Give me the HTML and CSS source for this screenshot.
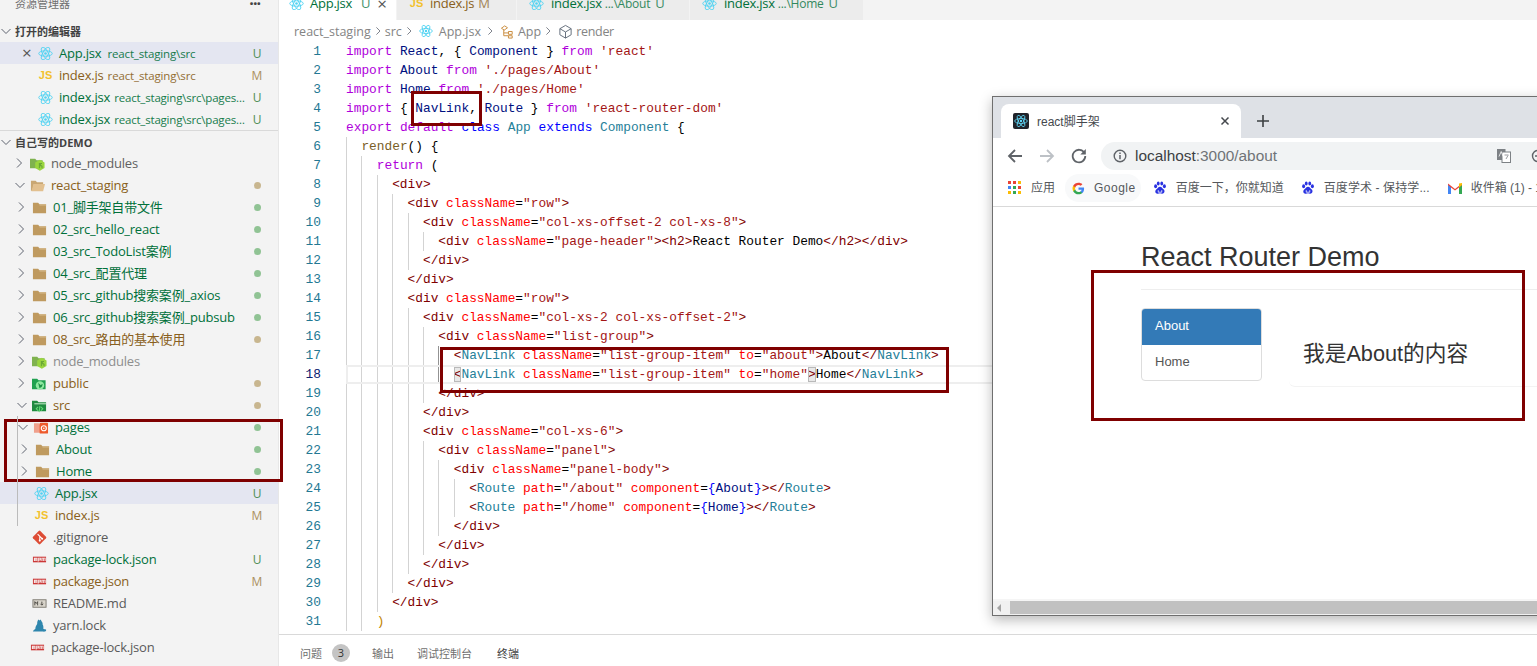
FILE: index.html
```html
<!DOCTYPE html>
<html lang="zh">
<head>
<meta charset="utf-8">
<title>App.jsx</title>
<link rel="stylesheet" href="styles.css">
</head>
<body>
<svg class="defs" width="0" height="0" aria-hidden="true">
  <symbol id="react" viewBox="0 0 16 16"><g fill="none" stroke="#52d3f2" stroke-width="1"><ellipse cx="8" cy="8" rx="7.2" ry="2.9"/><ellipse cx="8" cy="8" rx="7.2" ry="2.9" transform="rotate(60 8 8)"/><ellipse cx="8" cy="8" rx="7.2" ry="2.9" transform="rotate(120 8 8)"/></g><circle cx="8" cy="8" r="1.4" fill="#52d3f2"/></symbol>
  <symbol id="chev-r" viewBox="0 0 10 12"><path d="M3 1.5 7.5 6 3 10.5" fill="none" stroke="#5f6470" stroke-width="1"/></symbol>
  <symbol id="chev-d" viewBox="0 0 12 10"><path d="M1.5 3 6 7.5 10.5 3" fill="none" stroke="#5f6470" stroke-width="1"/></symbol>
  <symbol id="folder" viewBox="0 0 16 16"><path d="M1 3h5.500l1.500 1.500h7v9.500H1z" fill="#bf9a5f"/><path d="M8 4.500h7V6H8z" fill="#d3b586"/></symbol>
  <symbol id="folder-open" viewBox="0 0 16 16"><path d="M1 3h5l1.500 1.500h6.500V7H4L2.500 13.500H1z" fill="#c9a773"/><path d="M3.800 6.500H16l-2 7.500H1.500z" fill="#e2c08f"/></symbol>
  <symbol id="folder-node" viewBox="0 0 16 16"><path d="M0 3h5.500L7 4.500h6.500V13H0z" fill="#7fb24f"/><path d="M10.500 4l5 2.900v5.800l-5 2.900-5-2.900V6.900z" fill="#9ad53f"/><path d="M10 7.500v5.500M12.800 8H11v2.500h1.800V13" stroke="#5d9a33" stroke-width=".9" fill="none"/></symbol>
  <symbol id="folder-public" viewBox="0 0 16 16"><path d="M0 3h5.500L7 4.500h7.500V14H0z" fill="#20a150"/><circle cx="8.500" cy="10" r="4.500" fill="#8ee9a0"/><path d="M6.500 7l2.500 2.500 2.500-1-1 3-2.500 1.500z" fill="#1d9147"/></symbol>
  <symbol id="folder-src" viewBox="0 0 16 16"><path d="M0 3h5.500L7 4.500h8V14H0z" fill="#1f8a3f"/><path d="M2.500 5.500H15v1.300H2.500z" fill="#a9dbb0"/><path d="M6.500 9.500 4.500 11.500l2 2M9.500 9.500l2 2-2 2M8.500 8.500l-1 6.500" stroke="#62dc75" stroke-width="1.100" fill="none"/></symbol>
  <symbol id="folder-pages" viewBox="0 0 16 16"><path d="M.5 3.500h5l1.500 1.500h6v8.500H.5z" fill="#f0a08c"/><rect x="6.500" y="3" width="9" height="11.500" rx="1" fill="#ee5a2c"/><circle cx="11" cy="8.800" r="2.700" fill="none" stroke="#fff" stroke-width="1.200"/><circle cx="11" cy="8.800" r=".8" fill="#fff"/></symbol>
  <symbol id="npm" viewBox="0 0 16 16"><rect x="1" y="5" width="14" height="6" fill="#cb3837"/><path d="M2 6h3.500v3.500h-1V7h-.5v2.500H2zM6 6h3.500v3H7.200v1H6zM7.200 7v1h1V7zM10 6h4.500v3.500h-1V7h-.6v2.500h-1V7h-.7v2.500H10z" fill="#f6e6e6"/></symbol>
  <symbol id="git" viewBox="0 0 16 16"><rect x="2.500" y="2.500" width="11" height="11" rx="1.200" transform="rotate(45 8 8)" fill="#dd4c35"/><path d="M6 4.500 11 9.500M8.300 6.800v4.500" stroke="#fff" stroke-width="1.100" fill="none"/><circle cx="8.300" cy="11.300" r="1.100" fill="#fff"/><circle cx="10.800" cy="9.300" r="1.100" fill="#fff"/></symbol>
  <symbol id="md" viewBox="0 0 16 16"><rect x="1" y="4" width="14" height="8" fill="#d9d5cc" stroke="#7f7b72"/><path d="M3 10V6l1.500 2L6 6v4M10.500 6v3.500M9 8.300l1.500 1.500L12 8.300" stroke="#4e4b45" stroke-width="1" fill="none"/></symbol>
  <symbol id="yarn" viewBox="0 0 16 16"><path d="M1 14.500c.3-1.500 1.500-2 2.500-2.800.2-2.500 1.200-4 2-5.200C5.500 4 6 2.600 7 1.500l1 1.200 1.300-1 .8 1.800c1 .8 1.400 2.200 1.200 3.500 1 1.500 1 3.200.7 4.500.9.500 2 .8 3 .8v1.500c-1 .8-2.500.9-3.500.7H2.500c-.9 0-1.500-.1-1.500-.500z" fill="#2e86ad"/></symbol>
  <symbol id="paw" viewBox="0 0 16 16"><g fill="#2932e1"><ellipse cx="3" cy="6" rx="1.700" ry="2.200"/><ellipse cx="6" cy="2.800" rx="1.600" ry="2.200"/><ellipse cx="10" cy="2.800" rx="1.600" ry="2.200"/><ellipse cx="13" cy="6" rx="1.700" ry="2.200"/><path d="M8 6.500c2 0 2.800 2 4.300 3.200 1.700 1.700.7 4.800-1.800 4.800-1 0-1.500-.4-2.500-.4s-1.700.5-3 .4c-2.300 0-3.200-3-1.400-4.800C5.300 8.500 6 6.500 8 6.500z"/></g><path d="M6 10.500v2.300h4v-2.300" stroke="#fff" stroke-width=".9" fill="none"/></symbol>
</svg>

<div class="app">
  <aside class="side">
    <div class="explorer"><span>资源管理器</span><span class="dots">···</span></div>

    <div class="sec"><svg class="ch-d"><use href="#chev-d"/></svg>打开的编辑器</div>
    <div class="row sel oe">
      <span class="close">×</span><svg class="ic"><use href="#react"/></svg>
      <span class="nm un">App.jsx</span><span class="ds un">react_staging\src</span><span class="bd u">U</span>
    </div>
    <div class="row oe2">
      <b class="js">JS</b>
      <span class="nm mod">index.js</span><span class="ds mod">react_staging\src</span><span class="bd m">M</span>
    </div>
    <div class="row oe2">
      <svg class="ic"><use href="#react"/></svg>
      <span class="nm un">index.jsx</span><span class="ds un trunc">react_staging\src\pages\About</span><span class="bd u">U</span>
    </div>
    <div class="row oe2">
      <svg class="ic"><use href="#react"/></svg>
      <span class="nm un">index.jsx</span><span class="ds un trunc">react_staging\src\pages\Home</span><span class="bd u">U</span>
    </div>

    <div class="sec sec2"><svg class="ch-d"><use href="#chev-d"/></svg>自己写的DEMO</div>

    <div class="row i0"><svg class="ch-r"><use href="#chev-r"/></svg><svg class="ic"><use href="#folder-node"/></svg><span class="nm dim">node_modules</span></div>
    <div class="row i0"><svg class="ch-d2"><use href="#chev-d"/></svg><svg class="ic"><use href="#folder-open"/></svg><span class="nm mod">react_staging</span><span class="bd dot dm"></span></div>
    <div class="row i1"><svg class="ch-r"><use href="#chev-r"/></svg><svg class="ic"><use href="#folder"/></svg><span class="nm un">01_脚手架自带文件</span><span class="bd dot du"></span></div>
    <div class="row i1"><svg class="ch-r"><use href="#chev-r"/></svg><svg class="ic"><use href="#folder"/></svg><span class="nm un">02_src_hello_react</span><span class="bd dot du"></span></div>
    <div class="row i1"><svg class="ch-r"><use href="#chev-r"/></svg><svg class="ic"><use href="#folder"/></svg><span class="nm un">03_src_TodoList案例</span><span class="bd dot du"></span></div>
    <div class="row i1"><svg class="ch-r"><use href="#chev-r"/></svg><svg class="ic"><use href="#folder"/></svg><span class="nm un">04_src_配置代理</span><span class="bd dot du"></span></div>
    <div class="row i1"><svg class="ch-r"><use href="#chev-r"/></svg><svg class="ic"><use href="#folder"/></svg><span class="nm un">05_src_github搜索案例_axios</span><span class="bd dot du"></span></div>
    <div class="row i1"><svg class="ch-r"><use href="#chev-r"/></svg><svg class="ic"><use href="#folder"/></svg><span class="nm un">06_src_github搜索案例_pubsub</span><span class="bd dot du"></span></div>
    <div class="row i1"><svg class="ch-r"><use href="#chev-r"/></svg><svg class="ic"><use href="#folder"/></svg><span class="nm mod">08_src_路由的基本使用</span><span class="bd dot dm"></span></div>
    <div class="row i1"><svg class="ch-r"><use href="#chev-r"/></svg><svg class="ic"><use href="#folder-node"/></svg><span class="nm ign">node_modules</span></div>
    <div class="row i1"><svg class="ch-r"><use href="#chev-r"/></svg><svg class="ic"><use href="#folder-public"/></svg><span class="nm mod">public</span><span class="bd dot dm"></span></div>
    <div class="row i1"><svg class="ch-d2"><use href="#chev-d"/></svg><svg class="ic"><use href="#folder-src"/></svg><span class="nm mod">src</span><span class="bd dot dm"></span></div>
    <div class="subtree">
      <div class="row i2"><svg class="ch-d2"><use href="#chev-d"/></svg><svg class="ic"><use href="#folder-pages"/></svg><span class="nm un">pages</span><span class="bd dot du"></span></div>
      <div class="row i3"><svg class="ch-r"><use href="#chev-r"/></svg><svg class="ic"><use href="#folder"/></svg><span class="nm un">About</span><span class="bd dot du"></span></div>
      <div class="row i3"><svg class="ch-r"><use href="#chev-r"/></svg><svg class="ic"><use href="#folder"/></svg><span class="nm un">Home</span><span class="bd dot du"></span></div>
      <div class="row sel i4"><svg class="ic"><use href="#react"/></svg><span class="nm un">App.jsx</span><span class="bd u">U</span></div>
      <div class="row i4"><b class="js">JS</b><span class="nm mod">index.js</span><span class="bd m">M</span></div>
    </div>
    <div class="row i5"><svg class="ic"><use href="#git"/></svg><span class="nm plain">.gitignore</span></div>
    <div class="row i5"><svg class="ic"><use href="#npm"/></svg><span class="nm un">package-lock.json</span><span class="bd u">U</span></div>
    <div class="row i5"><svg class="ic"><use href="#npm"/></svg><span class="nm mod">package.json</span><span class="bd m">M</span></div>
    <div class="row i5"><svg class="ic"><use href="#md"/></svg><span class="nm plain">README.md</span></div>
    <div class="row i5"><svg class="ic"><use href="#yarn"/></svg><span class="nm plain">yarn.lock</span></div>
    <div class="row i6"><svg class="ic"><use href="#npm"/></svg><span class="nm plain">package-lock.json</span></div>
  </aside>

  <main class="main">
    <div class="tabs">
      <div class="tab active t1"><svg class="ic"><use href="#react"/></svg><span class="un">App.jsx</span><span class="un tb">U</span><span class="tx">×</span></div>
      <div class="tab t2"><b class="js">JS</b><span class="mod">index.js</span><span class="mod tb6">M</span></div>
      <div class="tab t3"><svg class="ic"><use href="#react"/></svg><span class="un">index.jsx</span><span class="un tp">...\About</span><span class="un tb2">U</span></div>
      <div class="tab t4"><svg class="ic"><use href="#react"/></svg><span class="un">index.jsx</span><span class="un tp">...\Home</span><span class="un tb2">U</span></div>
    </div>
    <div class="crumbs">
      <span>react_staging</span><svg class="cs"><use href="#chev-r"/></svg><span>src</span><svg class="cs"><use href="#chev-r"/></svg>
      <svg class="ic"><use href="#react"/></svg><span class="cn">App.jsx</span><svg class="cs"><use href="#chev-r"/></svg>
      <svg class="cg" viewBox="0 0 16 16"><path d="M1.500 4.500 5 2l3 2-3.500 2.500zM9 8h4v3H9zM9 12.500h4V15H9zM4 6v6.500h5M4 9.500h5" fill="none" stroke="#c98a3a" stroke-width="1"/></svg><span>App</span><svg class="cs"><use href="#chev-r"/></svg>
      <svg class="cg" viewBox="0 0 16 16"><path d="M8 1.500 14 5v6.500L8 15l-6-3.500V5zM2 5l6 3.500L14 5M8 8.500V15" fill="none" stroke="#5f6a78" stroke-width="1"/></svg><span class="rn">render</span>
    </div>
    <div class="code">
      <div class="l"><span class="n">1</span><span class="c"><span class="k">import</span> <span class="v">React</span>, { <span class="v">Component</span> } <span class="k">from</span> <span class="s">'react'</span></span></div>
      <div class="l"><span class="n">2</span><span class="c"><span class="k">import</span> <span class="v">About</span> <span class="k">from</span> <span class="s">'./pages/About'</span></span></div>
      <div class="l"><span class="n">3</span><span class="c"><span class="k">import</span> <span class="v">Home</span> <span class="k">from</span> <span class="s">'./pages/Home'</span></span></div>
      <div class="l"><span class="n">4</span><span class="c"><span class="k">import</span> { <span class="v">NavLink</span>, <span class="v">Route</span> } <span class="k">from</span> <span class="s">'react-router-dom'</span></span></div>
      <div class="l"><span class="n">5</span><span class="c"><span class="k">export</span> <span class="k">default</span> <span class="b">class</span> <span class="t">App</span> <span class="b">extends</span> <span class="t">Component</span> {</span></div>
      <div class="l"><span class="n">6</span><span class="c"><i class="g"></i><span class="f">render</span>() {</span></div>
      <div class="l"><span class="n">7</span><span class="c"><i class="g"></i><i class="g"></i><span class="k">return</span> (</span></div>
      <div class="l"><span class="n">8</span><span class="c"><i class="g"></i><i class="g"></i><i class="g"></i><span class="h">&lt;div&gt;</span></span></div>
      <div class="l"><span class="n">9</span><span class="c"><i class="g"></i><i class="g"></i><i class="g"></i><i class="g"></i><span class="h">&lt;div</span> <span class="a">className</span>=<span class="s">"row"</span><span class="h">&gt;</span></span></div>
      <div class="l"><span class="n">10</span><span class="c"><i class="g"></i><i class="g"></i><i class="g"></i><i class="g"></i><i class="g"></i><span class="h">&lt;div</span> <span class="a">className</span>=<span class="s">"col-xs-offset-2 col-xs-8"</span><span class="h">&gt;</span></span></div>
      <div class="l"><span class="n">11</span><span class="c"><i class="g"></i><i class="g"></i><i class="g"></i><i class="g"></i><i class="g"></i><i class="g"></i><span class="h">&lt;div</span> <span class="a">className</span>=<span class="s">"page-header"</span><span class="h">&gt;&lt;h2&gt;</span>React Router Demo<span class="h">&lt;/h2&gt;&lt;/div&gt;</span></span></div>
      <div class="l"><span class="n">12</span><span class="c"><i class="g"></i><i class="g"></i><i class="g"></i><i class="g"></i><i class="g"></i><span class="h">&lt;/div&gt;</span></span></div>
      <div class="l"><span class="n">13</span><span class="c"><i class="g"></i><i class="g"></i><i class="g"></i><i class="g"></i><span class="h">&lt;/div&gt;</span></span></div>
      <div class="l"><span class="n">14</span><span class="c"><i class="g"></i><i class="g"></i><i class="g"></i><i class="g"></i><span class="h">&lt;div</span> <span class="a">className</span>=<span class="s">"row"</span><span class="h">&gt;</span></span></div>
      <div class="l"><span class="n">15</span><span class="c"><i class="g"></i><i class="g"></i><i class="g"></i><i class="g"></i><i class="g"></i><span class="h">&lt;div</span> <span class="a">className</span>=<span class="s">"col-xs-2 col-xs-offset-2"</span><span class="h">&gt;</span></span></div>
      <div class="l"><span class="n">16</span><span class="c"><i class="g"></i><i class="g"></i><i class="g"></i><i class="g"></i><i class="g"></i><i class="g"></i><span class="h">&lt;div</span> <span class="a">className</span>=<span class="s">"list-group"</span><span class="h">&gt;</span></span></div>
      <div class="l"><span class="n">17</span><span class="c"><i class="g"></i><i class="g"></i><i class="g"></i><i class="g"></i><i class="g"></i><i class="g"></i><i class="g on"></i><span class="h">&lt;</span><span class="t">NavLink</span> <span class="a">className</span>=<span class="s">"list-group-item"</span> <span class="a">to</span>=<span class="s">"about"</span><span class="h">&gt;</span>About<span class="h">&lt;/</span><span class="t">NavLink</span><span class="h">&gt;</span></span></div>
      <div class="l cur"><span class="n">18</span><span class="c"><i class="g"></i><i class="g"></i><i class="g"></i><i class="g"></i><i class="g"></i><i class="g"></i><i class="g on"></i><span class="h mb">&lt;</span><span class="t">NavLink</span> <span class="a">className</span>=<span class="s">"list-group-item"</span> <span class="a">to</span>=<span class="s">"home"</span><span class="h mb">&gt;</span>Home<span class="h">&lt;/</span><span class="t">NavLink</span><span class="h">&gt;</span></span></div>
      <div class="l"><span class="n">19</span><span class="c"><i class="g"></i><i class="g"></i><i class="g"></i><i class="g"></i><i class="g"></i><i class="g"></i><span class="h">&lt;/div&gt;</span></span></div>
      <div class="l"><span class="n">20</span><span class="c"><i class="g"></i><i class="g"></i><i class="g"></i><i class="g"></i><i class="g"></i><span class="h">&lt;/div&gt;</span></span></div>
      <div class="l"><span class="n">21</span><span class="c"><i class="g"></i><i class="g"></i><i class="g"></i><i class="g"></i><i class="g"></i><span class="h">&lt;div</span> <span class="a">className</span>=<span class="s">"col-xs-6"</span><span class="h">&gt;</span></span></div>
      <div class="l"><span class="n">22</span><span class="c"><i class="g"></i><i class="g"></i><i class="g"></i><i class="g"></i><i class="g"></i><i class="g"></i><span class="h">&lt;div</span> <span class="a">className</span>=<span class="s">"panel"</span><span class="h">&gt;</span></span></div>
      <div class="l"><span class="n">23</span><span class="c"><i class="g"></i><i class="g"></i><i class="g"></i><i class="g"></i><i class="g"></i><i class="g"></i><i class="g"></i><span class="h">&lt;div</span> <span class="a">className</span>=<span class="s">"panel-body"</span><span class="h">&gt;</span></span></div>
      <div class="l"><span class="n">24</span><span class="c"><i class="g"></i><i class="g"></i><i class="g"></i><i class="g"></i><i class="g"></i><i class="g"></i><i class="g"></i><i class="g"></i><span class="h">&lt;</span><span class="t">Route</span> <span class="a">path</span>=<span class="s">"/about"</span> <span class="a">component</span>=<span class="p">{</span><span class="v">About</span><span class="p">}</span><span class="h">&gt;&lt;/</span><span class="t">Route</span><span class="h">&gt;</span></span></div>
      <div class="l"><span class="n">25</span><span class="c"><i class="g"></i><i class="g"></i><i class="g"></i><i class="g"></i><i class="g"></i><i class="g"></i><i class="g"></i><i class="g"></i><span class="h">&lt;</span><span class="t">Route</span> <span class="a">path</span>=<span class="s">"/home"</span> <span class="a">component</span>=<span class="p">{</span><span class="v">Home</span><span class="p">}</span><span class="h">&gt;&lt;/</span><span class="t">Route</span><span class="h">&gt;</span></span></div>
      <div class="l"><span class="n">26</span><span class="c"><i class="g"></i><i class="g"></i><i class="g"></i><i class="g"></i><i class="g"></i><i class="g"></i><i class="g"></i><span class="h">&lt;/div&gt;</span></span></div>
      <div class="l"><span class="n">27</span><span class="c"><i class="g"></i><i class="g"></i><i class="g"></i><i class="g"></i><i class="g"></i><i class="g"></i><span class="h">&lt;/div&gt;</span></span></div>
      <div class="l"><span class="n">28</span><span class="c"><i class="g"></i><i class="g"></i><i class="g"></i><i class="g"></i><i class="g"></i><span class="h">&lt;/div&gt;</span></span></div>
      <div class="l"><span class="n">29</span><span class="c"><i class="g"></i><i class="g"></i><i class="g"></i><i class="g"></i><span class="h">&lt;/div&gt;</span></span></div>
      <div class="l"><span class="n">30</span><span class="c"><i class="g"></i><i class="g"></i><i class="g"></i><span class="h">&lt;/div&gt;</span></span></div>
      <div class="l"><span class="n">31</span><span class="c"><i class="g"></i><i class="g"></i><span class="y">)</span></span></div>
    </div>
    <div class="panel-tabs">
      <span>问题</span><span class="count">3</span><span class="pt1">输出</span><span class="pt2">调试控制台</span><span class="pt3">终端</span>
    </div>
  </main>
</div>

<section class="chrome">
  <div class="strip">
    <div class="ctab">
      <svg class="fav" viewBox="0 0 16 16"><rect width="16" height="16" rx="2" fill="#20232a"/><g fill="none" stroke="#61dafb" stroke-width=".8"><ellipse cx="8" cy="8" rx="6.300" ry="2.500"/><ellipse cx="8" cy="8" rx="6.300" ry="2.500" transform="rotate(60 8 8)"/><ellipse cx="8" cy="8" rx="6.300" ry="2.500" transform="rotate(120 8 8)"/></g><circle cx="8" cy="8" r="1.200" fill="#61dafb"/></svg>
      <span class="ctitle">react脚手架</span>
      <svg class="cclose" viewBox="0 0 10 10"><path d="M1.500 1.500l7 7M8.500 1.500l-7 7" stroke="#45484d" stroke-width="1.500"/></svg>
    </div>
    <svg class="plus" viewBox="0 0 12 12"><path d="M6 0v12M0 6h12" stroke="#3c4043" stroke-width="1.600"/></svg>
  </div>
  <div class="toolbar">
    <svg class="nav" viewBox="0 0 16 16"><path d="M15 8H2M8 2 2 8l6 6" fill="none" stroke="#5f6368" stroke-width="1.800"/></svg>
    <svg class="nav" viewBox="0 0 16 16"><path d="M1 8h13M8 2l6 6-6 6" fill="none" stroke="#bdc1c6" stroke-width="1.800"/></svg>
    <svg class="nav" viewBox="0 0 16 16"><path d="M13.500 5A6.300 6.300 0 1 0 14.300 8" fill="none" stroke="#5f6368" stroke-width="1.800"/><path d="M14.800 1v5.500H9.300z" fill="#5f6368"/></svg>
    <div class="omni">
      <svg class="info" viewBox="0 0 14 14"><circle cx="7" cy="7" r="5.800" fill="none" stroke="#5f6368" stroke-width="1.400"/><path d="M7 6v4.300M7 3.500v1.500" stroke="#5f6368" stroke-width="1.500"/></svg>
      <span class="url"><span class="host">localhost</span>:3000/about</span>
      <svg class="trans" viewBox="0 0 14 14"><rect x="0" y="0" width="8.500" height="11" fill="#7d8185"/><rect x="5" y="3" width="8.500" height="10.500" fill="#fff" stroke="#7d8185"/><path d="M2 7.500 4.200 2.500l2 5" stroke="#fff" stroke-width=".8" fill="none"/><path d="M7.500 6h4M9 10l2-3.500" stroke="#7d8185" stroke-width=".8" fill="none"/></svg>
      <svg class="zoomi" viewBox="0 0 14 14"><circle cx="7" cy="7" r="5.500" fill="none" stroke="#5f6368" stroke-width="1.400"/><path d="M4 7h6" stroke="#5f6368" stroke-width="1.400"/></svg>
    </div>
  </div>
  <div class="bookmarks">
    <svg class="apps" viewBox="0 0 14 14"><g fill="#ea4335"><rect width="3" height="3"/><rect x="5" width="3" height="3"/></g><rect x="10" width="3" height="3" fill="#fbbc05"/><rect y="5" width="3" height="3" fill="#4285f4"/><rect x="5" y="5" width="3" height="3" fill="#34a853"/><rect x="10" y="5" width="3" height="3" fill="#ea4335"/><rect y="10" width="3" height="3" fill="#fbbc05"/><rect x="5" y="10" width="3" height="3" fill="#34a853"/><rect x="10" y="10" width="3" height="3" fill="#fbbc05"/></svg>
    <span class="bm">应用</span>
    <span class="gpill"><svg class="gl" viewBox="0 0 14 14"><path d="M13 7.200c0-.5 0-.9-.1-1.300H7v2.500h3.400c-.2.800-.6 1.400-1.300 1.900v1.600h2.100C12.400 10.700 13 9.100 13 7.200z" fill="#4285f4"/><path d="M7 13.300c1.700 0 3.200-.6 4.200-1.500l-2.100-1.600c-.6.400-1.300.6-2.100.6-1.600 0-3-1.100-3.500-2.600H1.300v1.700C2.400 12 4.500 13.300 7 13.300z" fill="#34a853"/><path d="M3.500 8.200c-.3-.8-.3-1.600 0-2.400V4.100H1.300a6.300 6.300 0 0 0 0 5.800z" fill="#fbbc05"/><path d="M7 3.200c.9 0 1.800.3 2.400.9l1.800-1.800C10.100 1.300 8.700.7 7 .7 4.500.7 2.400 2 1.300 4.100l2.200 1.700C4 4.300 5.400 3.200 7 3.200z" fill="#ea4335"/></svg><span class="gt">Google</span></span>
    <svg class="pw"><use href="#paw"/></svg><span class="bm b1">百度一下，你就知道</span>
    <svg class="pw"><use href="#paw"/></svg><span class="bm b2">百度学术 - 保持学...</span>
    <svg class="gm" viewBox="0 0 16 12"><path d="M1 12V1.500l7 5.500 7-5.500V12h-3V5.500L8 8.500 4 5.500V12z" fill="#ea4335"/><path d="M1 12h3V5.500L1 3z" fill="#4285f4"/><path d="M12 12h3V3l-3 2.500z" fill="#34a853"/><path d="M12 1.500 15 1v2l-3 2.500z" fill="#fbbc05"/></svg><span class="bm b3">收件箱 (1) - 1</span>
  </div>
  <div class="page">
    <h2 class="title">React Router Demo</h2>
    <div class="rule"></div>
    <div class="cols">
      <div class="lg"><div class="lgi on">About</div><div class="lgi">Home</div></div>
      <div class="about-panel">我是About的内容</div>
    </div>
  </div>
  <div class="hscroll"><span class="arrow"></span><span class="thumb"></span></div>
</section>

<div class="mark m1"></div>
<div class="mark m2"></div>
<div class="mark m3"></div>
<div class="mark m4"></div>
</body>
</html>
```

FILE: styles.css
```css
* { box-sizing: border-box; }
html, body { margin: 0; height: 100%; }
body { width: 1537px; height: 666px; overflow: hidden; position: relative; background: #fff; font-family: "Open Sans", "Noto Sans CJK SC", sans-serif; font-size: 13px; color: #424242; }
.defs { position: absolute; }
.app { display: flex; height: 666px; }

/* sidebar */
.side { width: 278px; flex: none; height: 666px; overflow: hidden; background: #f3f3f3; }
.explorer { display: flex; justify-content: space-between; height: 20px; padding: 0 18px 0 15px; line-height: 7px; font-size: 11px; color: #6f6f6f; }
.dots { font-size: 16px; font-weight: 700; letter-spacing: -1px; color: #444; }
.sec { height: 22px; display: flex; align-items: center; font-size: 11px; font-weight: 700; color: #424242; padding-left: 0; }
.sec2 { border-top: 1px solid #d9d9d9; height: 22px; }
.ch-d { width: 12px; height: 10px; margin: 0 3px 0 0; flex: none; }
.row { height: 22px; display: flex; align-items: center; padding-right: 14px; white-space: nowrap; }
.sel { background: #e4e6f1; }
.ic { width: 15px; height: 15px; flex: none; }
.ch-r { width: 10px; height: 12px; flex: none; margin-right: 6px; }
.ch-d2 { width: 12px; height: 10px; flex: none; margin-right: 4px; }
.nm { margin-left: 6px; font-size: 13px; line-height: 22px; letter-spacing: -.2px; }
.ds { margin-left: 6px; font-size: 11.500px; letter-spacing: -.15px; opacity: .9; }
.oe2 .ds { margin-left: 4px; }
.trunc { overflow: hidden; text-overflow: ellipsis; min-width: 0; flex: 1; margin-right: 5px; letter-spacing: -.2px; }
.un { color: #00703a; }
.mod { color: #895f20; }
.dim { color: #616161; }
.ign { color: #8e8e8e; }
.plain { color: #5a5a5a; }
.bd { margin-left: auto; width: 14px; flex: none; text-align: center; font-size: 12px; }
.u { color: #4f8f55; }
.m { color: #ab9060; }
.dot { height: 7px; width: 7px; border-radius: 50%; margin-right: 3px; }
.du { background: #90c394; }
.dm { background: #c8b68f; }
.oe { padding-left: 22px; }
.oe .close { width: 16px; font-size: 17px; line-height: 20px; color: #555; flex: none; }
.oe2 { padding-left: 38px; }
.js { width: 15px; flex: none; font: 700 11px "Liberation Sans", sans-serif; color: #f2c12e; text-align: center; }
.i0 { padding-left: 14px; }
.i1 { padding-left: 16px; }
.i2 { padding-left: 17px; }
.i2 .ic { width: 16px; }
.i3 { padding-left: 19px; }
.i4 { padding-left: 34px; }
.i5 { padding-left: 32px; }
.i6 { padding-left: 30px; }
.subtree { position: relative; }
.subtree::before { content: ""; position: absolute; left: 17px; top: 0; width: 1px; height: 110px; background: #bbb; z-index: 1; }

/* editor */
.main { flex: 1; min-width: 0; display: flex; flex-direction: column; height: 666px; border-left: 1px solid #e7e7e7; }
.tabs { display: flex; height: 20px; background: #f3f3f3; overflow: hidden; line-height: 7px; }
.tab { display: flex; align-items: flex-start; padding: 0 0 0 12px; border-right: 1px solid #f3f3f3; background: #ececec; font-size: 13px; letter-spacing: -.25px; height: 20px; white-space: nowrap; }
.tab .ic { margin-top: -4px; margin-right: 7px; }
.tab .js { margin-right: 6px; margin-top: 0; line-height: 7px; letter-spacing: 0; }
.tab.active { background: #fff; }
.t1 { width: 118px; padding-left: 10px; }
.t1 .ic { margin-right: 6px; }
.t2 { width: 120px; }
.t3 { width: 173px; }
.t4 { width: 174px; }
.tb { margin-left: 9px; opacity: .75; }
.tb6 { margin-left: 4px; opacity: .75; }
.tb2 { margin-left: 5px; opacity: .75; }
.tp { margin-left: 3px; font-size: 12px; opacity: .8; }
.tx { margin-left: 7px; font-size: 17px; color: #555; }
.crumbs { height: 22px; display: flex; align-items: center; padding-left: 15px; font-size: 12.500px; color: #848484; white-space: nowrap; }
.cs { width: 8px; height: 12px; margin: 0 3px; flex: none; }
.crumbs .ic { margin: 0 6px 0 3px; width: 14px; height: 14px; }
.cn { margin-right: 2px; }
.cg { width: 15px; height: 15px; flex: none; margin: 0 3px 0 3px; }
.rn { letter-spacing: -.3px; }
.code { flex: 1; min-height: 0; overflow: hidden; font: 12.830px/19px "Liberation Mono", monospace; color: #000; }
.l { display: flex; height: 19px; white-space: pre; }
.n { width: 42px; text-align: right; color: #237893; flex: none; }
.c { margin-left: 25px; flex: 1; height: 19px; }
.cur .c { outline: 2px solid #eee; outline-offset: -2px; }
.cur .n { color: #0b216f; }
.g { display: inline-block; width: 15.400px; height: 19px; border-left: 1px solid #d3d3d3; vertical-align: top; }
.g.on { border-left-color: #939393; }
.k { color: #af00db; }
.v { color: #001080; }
.s { color: #a31515; }
.b { color: #0000ff; }
.t { color: #267f99; }
.f { color: #795e26; }
.h { color: #800000; }
.a { color: #ff0000; }
.p { color: #0000ff; }
.y { color: #c18401; }
.mb { background: #e8e8e8; outline: 1px solid #b9b9b9; outline-offset: -1px; }
.panel-tabs { height: 32px; flex: none; border-top: 1px solid #d9d9d9; display: flex; align-items: center; padding: 4px 0 0 21px; font-size: 11px; color: #6f6f6f; }
.count { width: 18px; height: 18px; border-radius: 50%; background: #c4c4c4; color: #333; text-align: center; line-height: 18px; margin-left: 10px; }
.pt1 { margin-left: 22px; }
.pt2 { margin-left: 23px; }
.pt3 { margin-left: 25px; color: #424242; }

/* browser window */
.chrome { position: absolute; left: 992px; top: 96px; width: 560px; height: 520px; border: 1px solid #6f6f6f; background: #fff; display: flex; flex-direction: column; box-shadow: 0 4px 12px rgba(0,0,0,.28); font-family: "Liberation Sans", "Noto Sans CJK SC", sans-serif; }
.strip { height: 41px; flex: none; background: #dee1e6; display: flex; align-items: flex-end; padding-left: 8px; }
.ctab { width: 240px; height: 34px; background: #fff; border-radius: 8px 8px 0 0; display: flex; align-items: center; padding-left: 12px; }
.fav { width: 16px; height: 16px; flex: none; }
.ctitle { margin-left: 8px; padding-top: 1px; font-size: 12px; line-height: 16px; color: #45484d; flex: 1; }
.cclose { width: 10px; height: 10px; margin-right: 11px; flex: none; }
.plus { width: 12px; height: 12px; margin: 0 0 11px 16px; flex: none; }
.toolbar { height: 36px; flex: none; display: flex; align-items: center; padding-left: 14px; gap: 16px; background: #fff; }
.nav { width: 16px; height: 16px; flex: none; }
.omni { width: 470px; height: 28px; margin-left: -2px; flex: none; border-radius: 14px; background: #f1f3f4; display: flex; align-items: center; padding-left: 12px; }
.info { width: 14px; height: 14px; flex: none; }
.url { margin-left: 8px; font-size: 15.400px; color: #6f7377; }
.host { color: #3c4043; }
.trans { width: 14px; height: 14px; flex: none; margin-left: 220px; }
.zoomi { width: 14px; height: 14px; flex: none; margin-left: 20px; }
.bookmarks { height: 33px; flex: none; display: flex; align-items: center; padding: 0 0 4px 15px; border-bottom: 1px solid #d9d9d9; white-space: nowrap; font-size: 12px; line-height: 16px; color: #55585c; }
.apps { width: 14px; height: 14px; flex: none; }
.bm { margin-left: 9px; }
.gpill { display: flex; align-items: center; height: 28px; padding: 0 5px 0 7px; margin-left: 10px; border-radius: 14px; background: #f8f9fa; }
.gl { width: 13px; height: 13px; flex: none; }
.gt { margin-left: 9px; letter-spacing: .5px; }
.pw { width: 14px; height: 14px; flex: none; margin-left: 12px; }
.b1 { margin-right: 5px; }
.b2 { margin-right: 5px; letter-spacing: .1px; }
.gm { width: 16px; height: 12px; flex: none; margin-left: 12px; }
.b3 { margin-left: 8px; }
.page { flex: 1; min-height: 0; padding-left: 148px; background: #fff; color: #333; }
.title { margin: 0; font-weight: 400; font-size: 27px; line-height: 30px; padding-top: 35px; height: 82px; color: #333; }
.rule { height: 1px; background: #eee; }
.cols { display: flex; padding-top: 18px; }
.lg { width: 121px; flex: none; height: 73px; border: 1px solid #ddd; border-radius: 4px; font-size: 13px; overflow: hidden; }
.lgi { height: 36px; line-height: 33px; padding-left: 13px; color: #555; }
.lgi.on { height: 37px; line-height: 36px; margin: -1px -1px 0; padding-left: 14px; background: #337ab7; color: #fff; font-weight: 400; }
.about-panel { margin-left: 27px; width: 280px; height: 79px; padding: 27px 0 0 14px; font-size: 21.700px; line-height: 38px; color: #333; border-bottom: 1px solid #f3f3f3; border-radius: 0 0 0 6px; }
.hscroll { height: 16px; flex: none; background: #f1f1f1; display: flex; align-items: center; border-top: 2px solid #f5f5f5; border-bottom: 1px solid #f1f1f1; }
.arrow { width: 0; height: 0; margin-left: 4px; border: 4px solid transparent; border-right: 4px solid #a3a3a3; border-left: 0; }
.thumb { margin-left: 9px; flex: 1; height: 13px; background: #c1c1c1; }

/* annotation rectangles */
.mark { position: absolute; border: 3px solid #7f0000; pointer-events: none; }
.m1 { left: 411px; top: 91px; width: 71px; height: 35px; }
.m2 { left: 440px; top: 347px; width: 509px; height: 46px; }
.m3 { left: 4px; top: 419px; width: 279px; height: 63px; }
.m4 { left: 1091px; top: 270px; width: 434px; height: 151px; }
```
